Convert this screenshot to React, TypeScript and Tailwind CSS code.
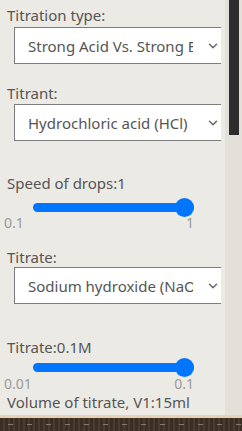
import { ChevronDown } from 'lucide-react';

function Dropdown({ value }: { value: string }) {
  return (
    <div className="ml-[14px] flex h-[37px] w-[215px] items-center border border-[#7d7d7d] bg-white">
      <span className="ml-[13px] w-[165px] overflow-hidden whitespace-nowrap text-[15px] leading-5 text-[#555]">
        {value}
      </span>
      <ChevronDown className="ml-[13px] h-[14px] w-[14px] text-[#666]" strokeWidth={2.5} />
    </div>
  );
}

function Slider({ min, max, gap }: { min: string; max: string; gap: string }) {
  return (
    <div>
      <div className="relative ml-[33px] h-[9px] w-[161px] rounded-full bg-[#0075ff]">
        <div className="absolute right-0 top-[-5px] h-[19px] w-[19px] rounded-full bg-[#0075ff]" />
      </div>
      <div className={`ml-[4px] flex w-[190px] justify-between text-[14px] leading-4 text-[#9a9a9a] ${gap}`}>
        <span>{min}</span>
        <span>{max}</span>
      </div>
    </div>
  );
}

function Label({ children }: { children: React.ReactNode }) {
  return <div className="ml-[7px] text-[15px] leading-5 text-[#555]">{children}</div>;
}

export default function App() {
  return (
    <div className="flex h-[431px] w-[242px] flex-col bg-[#eceae5] font-['Noto_Sans',sans-serif]">
      <div className="flex h-[415px]">
        <div className="w-[225px] overflow-hidden pt-[5px]">
          <div className="w-[221px] overflow-hidden">
            <Label>Titration type:</Label>
            <div className="mt-[2px]">
              <Dropdown value="Strong Acid Vs. Strong Base" />
            </div>
            <div className="mt-[19px]">
              <Label>Titrant:</Label>
            </div>
            <div className="mt-[1px]">
              <Dropdown value="Hydrochloric acid (HCl)" />
            </div>
            <div className="mt-[32px]">
              <Label>Speed of drops:1</Label>
            </div>
            <div className="mt-[10px]">
              <Slider min="0.1" max="1" gap="mt-[3px]" />
            </div>
            <div className="mt-[16px]">
              <Label>Titrate:</Label>
            </div>
            <div className="mt-[0px]">
              <Dropdown value="Sodium hydroxide (NaOH)" />
            </div>
            <div className="mt-[33px]">
              <Label>Titrate:0.1M</Label>
            </div>
            <div className="mt-[6px]">
              <Slider min="0.01" max="0.1" gap="mt-[4px]" />
            </div>
            <Label>Volume of titrate, V1:15ml</Label>
          </div>
        </div>
        <div className="w-[17px] bg-[#e3e0d9] pl-[4px]">
          <div className="h-[135px] w-[10px] bg-[#2d2d2d]" />
        </div>
      </div>
      <div className="h-[3px] bg-[#e6d2b4]" />
      <div className="relative h-[13px] bg-[repeating-linear-gradient(90deg,#3a2e25_0px,#3a2e25_3px,#4b3c31_3px,#4b3c31_5px)]">
        <div className="absolute left-0 right-0 top-[6px] h-[1px] bg-[repeating-linear-gradient(90deg,transparent_0px,transparent_8px,#8a7a6a_8px,#8a7a6a_13px,transparent_13px,transparent_19px)]" />
      </div>
    </div>
  );
}
